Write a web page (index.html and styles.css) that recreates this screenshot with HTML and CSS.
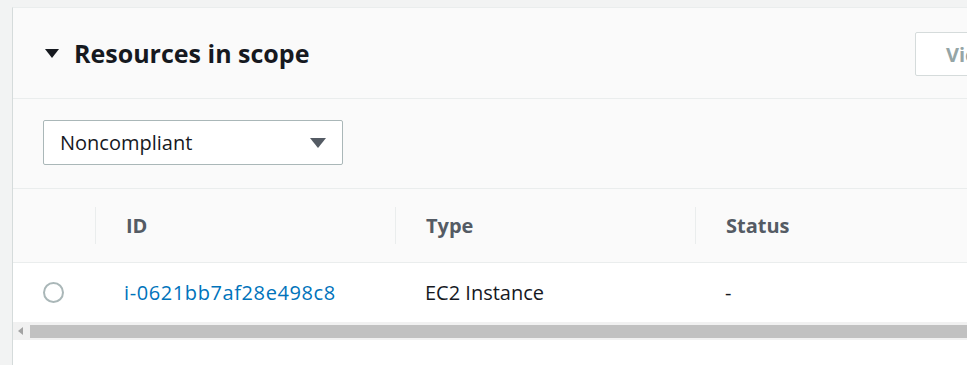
FILE: index.html
```html
<!DOCTYPE html>
<html>
<head>
<meta charset="utf-8">
<link rel="stylesheet" href="styles.css">
</head>
<body>
<div class="page">
  <div class="card">
    <div class="header">
      <div class="title">
        <svg class="caret" width="14" height="11" viewBox="0 0 14 11"><path d="M0 1h14L7 10z" fill="#16191f"/></svg>
        <h2>Resources in scope</h2>
      </div>
      <button class="btn">View details</button>
    </div>
    <div class="filter">
      <div class="select">
        <span>Noncompliant</span>
        <svg width="16" height="12" viewBox="0 0 16 12"><path d="M0 1h16L8 11z" fill="#545b64"/></svg>
      </div>
    </div>
    <div class="table">
      <div class="thead">
        <div class="cell sel"></div>
        <div class="cell col"><span class="div"></span><span class="th">ID</span></div>
        <div class="cell col"><span class="div"></span><span class="th">Type</span></div>
        <div class="cell col"><span class="div"></span><span class="th">Status</span></div>
      </div>
      <div class="trow">
        <div class="cell sel"><span class="radio"></span></div>
        <div class="cell col"><a class="link">i-0621bb7af28e498c8</a></div>
        <div class="cell col"><span class="td">EC2 Instance</span></div>
        <div class="cell col"><span class="td">-</span></div>
      </div>
      <div class="scroll">
        <svg class="arr" width="6" height="8" viewBox="0 0 6 8"><path d="M5 0v8L0 4z" fill="#a3a3a3"/></svg>
        <div class="thumb"></div>
      </div>
    </div>
  </div>
</div>
</body>
</html>
```

FILE: styles.css
```css
* { box-sizing: border-box; }
html, body { margin: 0; padding: 0; }
body {
  background: #f2f3f3;
  font-family: "Open Sans", "Noto Sans", Arial, sans-serif;
  color: #16191f;
  width: 967px;
  height: 365px;
  overflow: hidden;
}
.page { padding: 7px 0 0 12px; }
.card {
  background: #fafafa;
  border-left: 1px solid #d5dbdb;
  border-top: 1px solid #eaeded;
  width: 955px;
  height: 358px;
  overflow: hidden;
}
.header {
  height: 91px;
  border-bottom: 1px solid #eaeded;
  display: flex;
  align-items: center;
  padding-left: 32px;
}
.title { display: flex; align-items: center; gap: 15px; }
.caret { margin-top: 1px; }
h2 {
  margin: 0;
  font-size: 25px;
  font-weight: 700;
  color: #16191f;
}
.btn {
  flex-shrink: 0;
  margin-left: auto;
  margin-right: -134px;
  margin-top: 2px;
  width: 186px;
  height: 44px;
  border: 1px solid #d5dbdb;
  border-radius: 2px;
  background: #ffffff;
  color: #95a5a6;
  font-family: inherit;
  font-weight: 700;
  font-size: 20px;
  text-align: left;
  padding-left: 30px;
}
.filter {
  height: 90px;
  padding: 21px 0 0 30px;
  border-bottom: 1px solid #eaeded;
}
.select {
  width: 300px;
  height: 45px;
  background: #fff;
  border: 1px solid #aab7b8;
  border-radius: 2px;
  display: flex;
  align-items: center;
  justify-content: space-between;
  padding: 0 16px 0 16px;
  font-size: 20px;
  color: #16191f;
}
.table { background: #fff; height: 178px; }
.thead, .trow { display: flex; }
.thead {
  background: #fafafa;
  height: 74px;
  border-bottom: 1px solid #eaeded;
}
.trow { height: 59px; background: #fff; }
.cell { display: flex; align-items: center; flex-shrink: 0; }
.sel { width: 82px; padding-left: 30px; }
.col { width: 300px; position: relative; padding-left: 31px; }
.div {
  position: absolute;
  left: 0;
  top: 18px;
  bottom: 18px;
  border-left: 1px solid #eaeded;
}
.th { font-weight: 700; font-size: 20px; color: #545b64; }
.td { font-size: 20px; color: #16191f; }
.trow .col { padding-left: 29px; }
.trow .col + .col { padding-left: 30px; }
.link { color: #0073bb; font-size: 20px; letter-spacing: 0.6px; }
.radio {
  width: 21px;
  height: 21px;
  border: 2px solid #aab7b8;
  border-radius: 50%;
  background: #fff;
}
.scroll {
  height: 18px;
  background: #f1f1f1;
  display: flex;
  align-items: center;
  padding-left: 5px;
}
.arr { margin-right: 6px; }
.thumb { flex: 1; height: 13px; background: #c1c1c1; }
```
